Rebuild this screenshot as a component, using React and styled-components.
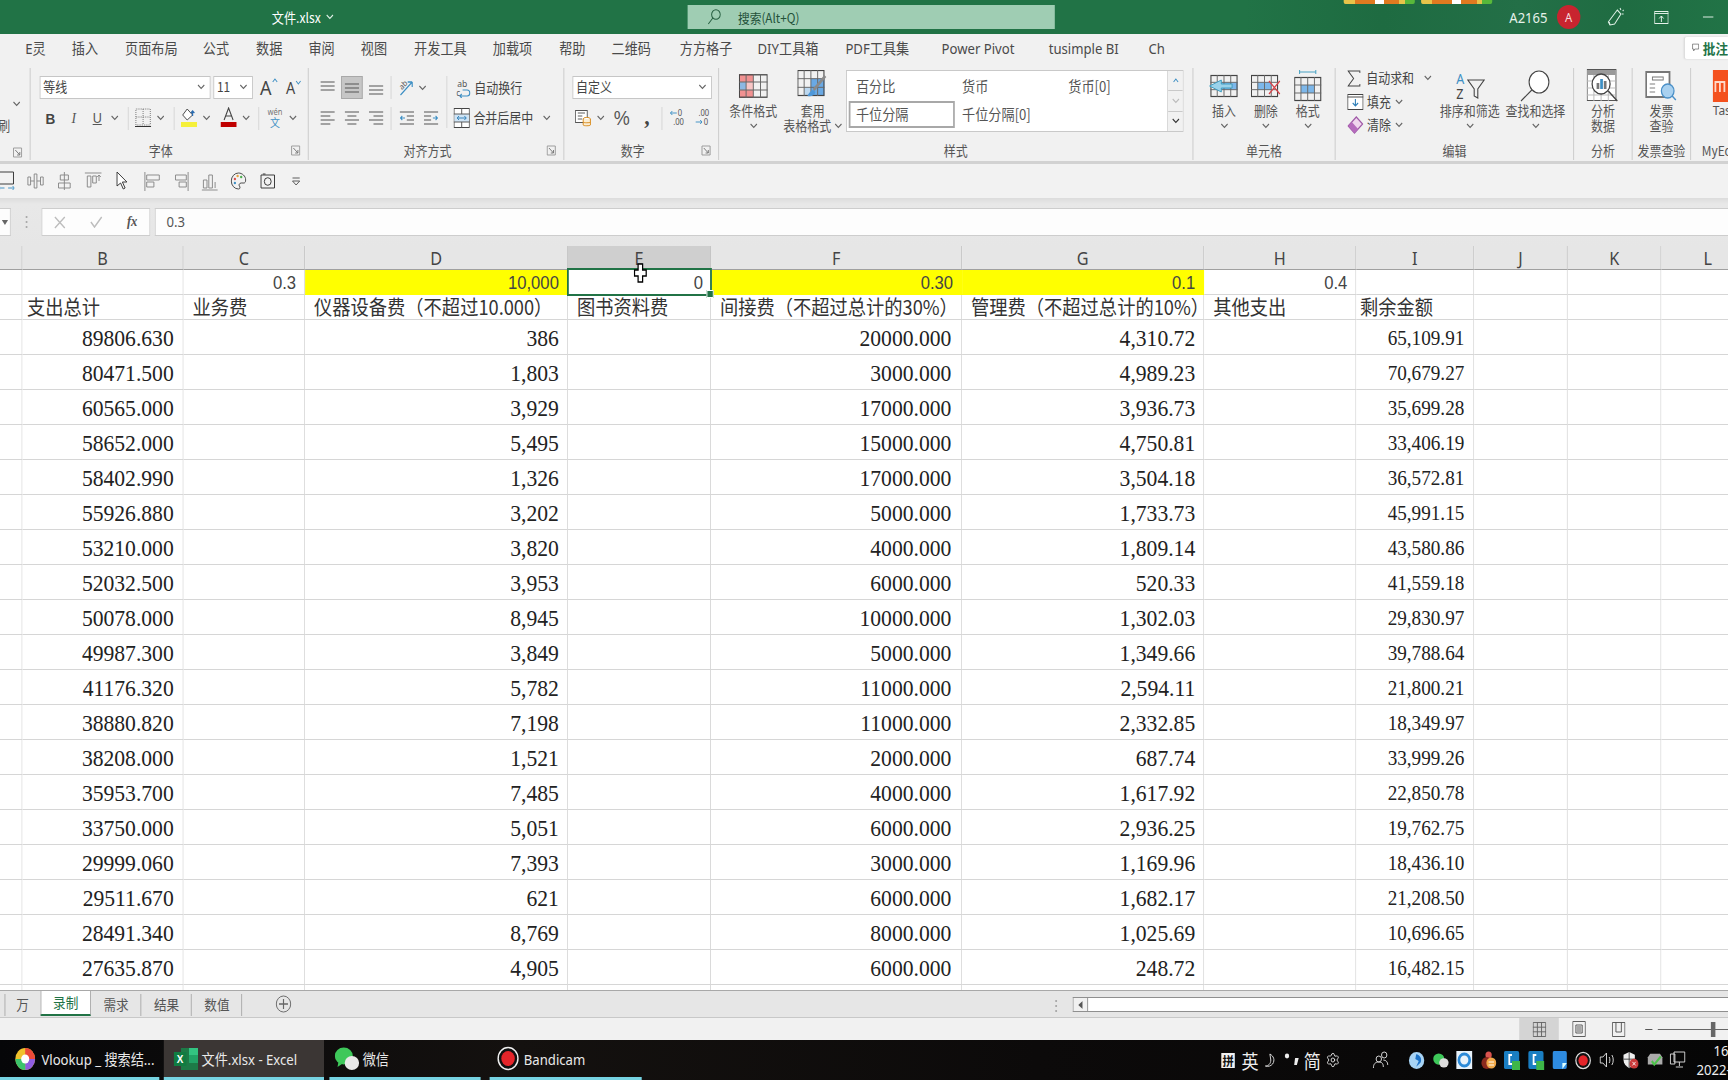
import React from 'react'
import styled, { createGlobalStyle } from 'styled-components'
import { Settings } from 'lucide-react'

const UI_FONT = `"Noto Sans", "Noto Sans CJK SC", sans-serif`
const CJK_FONT = `"Noto Sans CJK SC", "Noto Sans", sans-serif`

const GlobalStyle = createGlobalStyle`
  html, body {
    margin: 0;
    padding: 0;
    width: 1728px;
    height: 1080px;
    overflow: hidden;
    background: #000;
  }
  #root {
    width: 1728px;
    height: 1080px;
    overflow: hidden;
  }
`

// The capture is a 1920 wide desktop squeezed to 1728, so the page is laid out at 1920.
const Desktop = styled.div`
  width: 1920px;
  height: 1080px;
  display: flex;
  flex-direction: column;
  transform: scaleX(0.9);
  transform-origin: left top;
  font-family: ${UI_FONT};
  color: #444;
  background: #f1f1f1;
`

/* ---------- title bar ---------- */
const TitleBar = styled.div`
  flex: 0 0 34px;
  display: flex;
  align-items: center;
  background: linear-gradient(90deg, #217346 0 72%, #1e6b41 80%, #236f47 88%, #1f6c42 94%, #217346 100%);
  color: #fff;
  padding-left: 302px;
  overflow: hidden;
`
const FileName = styled.span`
  font-size: 13.5px;
  font-family: ${CJK_FONT};
  width: 53px;
  white-space: nowrap;
`
const SearchBox = styled.div`
  width: 408px;
  height: 24px;
  margin-left: 393px;
  background: #9fcdb3;
  display: flex;
  align-items: center;
  padding-left: 22px;
  box-sizing: border-box;
  color: #24523a;
  font-size: 13px;
  font-family: ${CJK_FONT};
`
const SearchText = styled.span`
  margin-left: 19px;
`
const Ornaments = styled.div`
  display: flex;
  gap: 7px;
  align-self: flex-start;
  margin-left: 321px;
`
const Ornament = styled.div`
  width: 79px;
  height: 4px;
  border-radius: 0 0 2px 2px;
  background: linear-gradient(90deg, #e8c44a 0 16%, #e07a20 16% 44%, #fff 44% 56%, #e07a20 56% 78%, #e8c44a 78% 86%, #58b83a 86%);
`
const UserName = styled.span`
  margin-left: 19px;
  font-size: 14.5px;
  color: #e6f2ea;
  width: 41px;
`
const Avatar = styled.span`
  margin-left: 12px;
  width: 26px;
  height: 24px;
  border-radius: 50%;
  background: #c8242f;
  color: #f6dcdc;
  font-size: 12.5px;
  display: flex;
  align-items: center;
  justify-content: center;
`
const TitleIcon = styled.span`
  display: inline-flex;
  margin-left: ${p => p.$ml}px;
`

/* ---------- ribbon tabs ---------- */
const TabRow = styled.div`
  flex: 0 0 34px;
  box-sizing: border-box;
  padding-bottom: 7px;
  display: flex;
  align-items: center;
  background: #f1f1f1;
  overflow: hidden;
`
const RibbonTab = styled.span`
  margin-left: ${p => p.$ml}px;
  font-size: 14.6px;
  font-family: ${UI_FONT};
  color: #4a4a4a;
  white-space: nowrap;
`
const CommentButton = styled.div`
  margin-left: auto;
  width: 48px;
  height: 22px;
  background: #fff;
  border-radius: 2px 0 0 2px;
  box-shadow: 0 0 2px #ccc;
  display: flex;
  align-items: center;
  padding-left: 8px;
  gap: 4px;
  box-sizing: border-box;
  overflow: hidden;
  color: #217346;
  font-size: 14px;
  font-weight: 700;
  font-family: ${CJK_FONT};
  white-space: nowrap;
`

/* ---------- ribbon ---------- */
const Ribbon = styled.div`
  flex: 0 0 96px;
  box-sizing: border-box;
  display: flex;
  background: #f1f1f1;
  border-bottom: 3px solid #d2d2d2;
  overflow: hidden;
`
const Group = styled.div`
  flex: 0 0 ${p => p.$w}px;
  box-sizing: border-box;
  height: 92px;
  display: flex;
  flex-direction: column;
  border-right: ${p => (p.$last ? 'none' : '1px solid #c8c8c8')};
`
const GroupBody = styled.div`
  flex: 1;
  min-height: 0;
  display: flex;
  padding-left: ${p => p.$pl || 0}px;
`
const StackBody = styled(GroupBody)`
  flex-direction: column;
`
const GroupFoot = styled.div`
  flex: 0 0 16px;
  display: flex;
  align-items: center;
  font-size: 13.3px;
  font-family: ${CJK_FONT};
  color: #555;
  white-space: nowrap;
`
const FootLabel = styled.span`
  flex: 1;
  text-align: center;
`
const Launcher = styled.span`
  flex: 0 0 19px;
  display: flex;
  justify-content: flex-start;
`
const ControlRow = styled.div`
  display: flex;
  align-items: center;
  height: ${p => p.$h || 23}px;
  margin-top: ${p => p.$mt || 0}px;
`
const Slot = styled.span`
  flex: 0 0 ${p => p.$w}px;
  margin-left: ${p => p.$ml || 0}px;
  display: inline-flex;
  align-items: center;
  justify-content: center;
  height: ${p => (p.$active ? '23px' : 'auto')};
  background: ${p => (p.$active ? '#c6c6c6' : 'transparent')};
  box-shadow: ${p => (p.$active ? 'inset 0 0 0 1px #a8a8a8' : 'none')};
`
const Sep = styled.span`
  flex: 0 0 1px;
  height: ${p => p.$h || 23}px;
  margin-left: ${p => p.$ml}px;
  background: #d4d4d4;
  align-self: ${p => (p.$tall ? 'flex-start' : 'auto')};
`
const Combo = styled.div`
  flex: 0 0 ${p => p.$w}px;
  margin-left: ${p => p.$ml || 0}px;
  box-sizing: border-box;
  height: 23px;
  background: #fff;
  border: 1px solid #c6c6c6;
  display: flex;
  align-items: center;
  justify-content: space-between;
  padding: 0 5px 2px 3px;
  font-size: 13.3px;
  font-family: ${CJK_FONT};
  color: #444;
`
const Bold = styled.span`
  font: 700 15px "Liberation Sans", sans-serif;
  color: #444;
`
const Italic = styled.span`
  font: italic 400 15px "Liberation Serif", serif;
  color: #555;
`
const Under = styled.span`
  font: 400 14px "Liberation Sans", sans-serif;
  color: #555;
  text-decoration: underline;
`
const GrowLetter = styled.span`
  margin-left: ${p => p.$ml}px;
  font: 400 ${p => p.$size}px "Noto Sans", sans-serif;
  color: #444;
  display: inline-flex;
  align-items: flex-start;
  line-height: 1;
`
const InlineLabel = styled.span`
  margin-left: ${p => p.$ml || 4}px;
  padding-bottom: 1px;
  font-size: 13.3px;
  font-family: ${CJK_FONT};
  color: #444;
  white-space: nowrap;
`
const Percent = styled.span`
  font: 400 20px "Liberation Sans", sans-serif;
  color: #555;
`
const Comma = styled.span`
  font: 700 24px/10px "Liberation Serif", serif;
  color: #444;
  height: 14px;
`
const BigButton = styled.div`
  flex: 0 0 ${p => p.$w}px;
  margin-left: ${p => p.$ml || 0}px;
  display: flex;
  flex-direction: column;
  align-items: center;
  font-size: 13.3px;
  line-height: 15px;
  font-family: ${CJK_FONT};
  color: #555;
  white-space: nowrap;
`
const BigIcon = styled.div`
  height: 35px;
  display: flex;
  align-items: center;
  justify-content: center;
`
const ButtonLine = styled.div`
  display: flex;
  align-items: center;
  justify-content: center;
  height: 15px;
  gap: 3px;
`
const Gallery = styled.div`
  flex: 0 0 372px;
  margin-left: 2px;
  margin-top: 2px;
  height: 62px;
  box-sizing: border-box;
  background: #fff;
  border: 1px solid #c9c9c9;
  display: flex;
`
const StyleGrid = styled.div`
  flex: 1;
  display: grid;
  grid-template-columns: 118px 118px 118px;
  grid-template-rows: 30px 27px;
  padding: 0 0 0 2px;
`
const StyleCell = styled.div`
  box-sizing: border-box;
  display: flex;
  align-items: center;
  padding: 0 0 2px 6px;
  font-size: 14.6px;
  font-family: ${CJK_FONT};
  color: #555;
  border: ${p => (p.$on ? '2px solid #a8a8a8' : '2px solid transparent')};
  background: #fff;
`
const GalleryArrows = styled.div`
  flex: 0 0 16px;
  display: flex;
  flex-direction: column;
  border-left: 1px solid #c9c9c9;
`
const GalleryArrow = styled.div`
  flex: 1;
  display: flex;
  align-items: center;
  justify-content: center;
  background: #f1f1f1;
  border-bottom: 1px solid #c9c9c9;
  &:last-child {
    border-bottom: none;
  }
`
const EditRows = styled.div`
  flex: 0 0 101px;
  display: flex;
  flex-direction: column;
  gap: 3.5px;
  padding-left: 13px;
`
const EditRow = styled.div`
  height: 20px;
  display: flex;
  align-items: center;
`
const ClippedBrush = styled.div`
  flex: 1;
  display: flex;
  flex-direction: column;
  align-items: flex-end;
  padding: 33px 10px 0 0;
  font-size: 14px;
  font-family: ${CJK_FONT};
  color: #555;
  gap: 9px;
`
const CutText = styled.span`
  align-self: flex-start;
  margin-left: -2px;
  font-size: 13.3px;
`
const MyEdButton = styled(BigButton)`
  align-items: flex-start;
  padding-left: 24px;
  font-family: ${UI_FONT};
`

/* ---------- quick access strip ---------- */
const QuickBar = styled.div`
  flex: 0 0 34px;
  display: flex;
  align-items: center;
  background: #f2f2f2;
`

/* ---------- formula bar ---------- */
const FormulaArea = styled.div`
  flex: 0 0 48px;
  box-sizing: border-box;
  padding-top: 10px;
  display: flex;
  align-items: flex-start;
  background: linear-gradient(#dcdcdc, #e8e8e8 6px, #e6e6e6);
`
const FormulaBox = styled.div`
  height: 28px;
  box-sizing: border-box;
  background: #fdfdfd;
  border: 1px solid #cdcdcd;
  display: flex;
  align-items: center;
`
const NameBox = styled(FormulaBox)`
  flex: 0 0 12px;
  justify-content: flex-end;
  border-left: none;
  padding-right: 2px;
`
const FormulaDots = styled.span`
  flex: 0 0 34px;
  height: 28px;
  display: flex;
  align-items: center;
  justify-content: center;
`
const ButtonsBox = styled(FormulaBox)`
  flex: 0 0 121px;
  gap: 27px;
  padding-left: 13px;
`
const FormulaInput = styled(FormulaBox)`
  flex: 1;
  margin-left: 5px;
  border-right: none;
  padding: 0 0 3px 12px;
  font: 400 14.6px "Noto Sans", sans-serif;
  color: #555;
`
const Fx = styled.span`
  font: italic 700 14px "Liberation Serif", serif;
  color: #555;
`

/* ---------- sheet ---------- */
const Sheet = styled.div`
  position: relative;
  flex: 1;
  min-height: 0;
  overflow: hidden;
  background: #fff;
`
const COLUMNS = '25px 179px 135px 292px 159px 279px 269px 169px 131px 104px 104px 104px'
const Row = styled.div`
  display: grid;
  grid-template-columns: ${COLUMNS};
  grid-template-rows: ${p => p.$h}px;
  height: ${p => p.$h}px;
`
const HeadCell = styled.div`
  box-sizing: border-box;
  display: flex;
  align-items: center;
  justify-content: center;
  background: ${p => (p.$on ? '#cfcfcf' : '#e6e6e6')};
  border-right: 1px solid #c4c4c4;
  border-bottom: 1px solid #a0a0a0;
  font: 400 18px "Noto Sans", sans-serif;
  line-height: 1;
  color: #444;
`
const Cell = styled.div`
  box-sizing: border-box;
  min-height: 0;
  display: flex;
  align-items: center;
  justify-content: ${p => (p.$text ? 'flex-start' : 'flex-end')};
  padding: ${p => (p.$text ? `0 0 0 ${p.$pl}px` : `0 ${p.$pr || 11}px 0 0`)};
  border-right: 1px solid ${p => (p.$fill ? p.$fill : '#d6d6d6')};
  border-bottom: 1px solid ${p => (p.$fill ? p.$fill : '#d6d6d6')};
  background: ${p => p.$fill || '#fff'};
  white-space: nowrap;
  line-height: 1;
`
const NumCell = styled(Cell)`
  font: 400 ${p => p.$size || 24}px/1 "Liberation Serif", serif;
  color: #222;
  padding-top: ${p => (p.$size ? 3 : 2)}px;
`
const ParamCell = styled(Cell)`
  font: 400 18.5px/1 "Liberation Sans", sans-serif;
  color: #444;
  padding-right: 9px;
  padding-top: 2px;
`
const TitleCell = styled(Cell)`
  font: 400 20.3px/1 ${CJK_FONT};
  color: #333;
  padding-bottom: 1px;
`
const SelectedCell = styled(ParamCell)`
  position: relative;
  margin: -2px 0 0 -1px;
  width: calc(100% + 2px);
  height: calc(100% + 3px);
  border: 2px solid #217346;
  padding-right: 8px;
  z-index: 1;
`
const FillHandle = styled.span`
  position: absolute;
  right: -4px;
  bottom: -4px;
  width: 6px;
  height: 6px;
  background: #217346;
  border: 1px solid #fff;
`
const CellCursor = styled.svg`
  position: absolute;
  left: 704px;
  top: 17px;
  z-index: 2;
`

/* ---------- sheet tabs ---------- */
const SheetBar = styled.div`
  flex: 0 0 28px;
  box-sizing: border-box;
  display: flex;
  background: #e6e6e6;
  border-top: 1px solid #a8a8a8;
  border-bottom: 1px solid #c8c8c8;
  padding-left: 5px;
  align-items: flex-start;
`
const SheetTab = styled.div`
  padding: 0 ${p => p.$px || 13}px 2px;
  height: ${p => (p.$on ? 25 : 22)}px;
  margin-top: ${p => (p.$on ? 0 : 3)}px;
  display: flex;
  align-items: center;
  font-size: 14px;
  font-family: ${CJK_FONT};
  color: ${p => (p.$on ? '#217346' : '#555')};
  background: ${p => (p.$on ? '#fff' : 'transparent')};
  border-left: 1px solid ${p => (p.$on ? '#a8a8a8' : 'transparent')};
  border-right: 1px solid ${p => (p.$line ? '#a8a8a8' : p.$on ? '#a8a8a8' : 'transparent')};
  border-bottom: ${p => (p.$on ? '2px solid #217346' : 'none')};
  box-sizing: border-box;
  &:first-child {
    border-left: 1px solid #a8a8a8;
  }
`
const AddSheet = styled.span`
  margin-left: 37px;
  margin-top: 4px;
  display: inline-flex;
`
const ScrollGrip = styled.span`
  margin-left: 848px;
  margin-top: 9px;
  display: inline-flex;
`
const ScrollTrack = styled.div`
  flex: 1;
  margin-left: 17px;
  margin-top: 6px;
  height: 15px;
  box-sizing: border-box;
  background: #fff;
  border: 1px solid #8f8f8f;
  border-right: none;
  display: flex;
`
const ScrollLeft = styled.span`
  flex: 0 0 15px;
  background: #f1f1f1;
  border-right: 1px solid #8f8f8f;
  display: flex;
  align-items: center;
  justify-content: center;
`

/* ---------- status bar ---------- */
const StatusBar = styled.div`
  flex: 0 0 22px;
  display: flex;
  align-items: center;
  background: #f1f1f1;
  padding-left: 1688px;
  overflow: hidden;
`
const ViewButton = styled.span`
  flex: 0 0 ${p => p.$w}px;
  height: 22px;
  display: flex;
  align-items: center;
  justify-content: center;
  background: ${p => (p.$on ? '#d4d4d4' : 'transparent')};
`
const ZoomMinus = styled.span`
  flex: 0 0 8px;
  height: 1px;
  background: #555;
  margin-left: 8px;
`
const ZoomTrack = styled.span`
  flex: 1;
  height: 1px;
  margin-left: 6px;
  background: #666;
  position: relative;
`
const ZoomThumb = styled.span`
  position: absolute;
  left: 59px;
  top: -7px;
  width: 5px;
  height: 15px;
  background: #666;
`

/* ---------- taskbar ---------- */
const TaskBar = styled.div`
  flex: 0 0 40px;
  display: flex;
  background: linear-gradient(90deg, #060608, #14110f 30%, #0c0a0a 60%, #060606);
  color: #e9e9e9;
  overflow: hidden;
`
const TaskItem = styled.div`
  flex: 0 0 ${p => p.$w}px;
  margin-left: ${p => p.$ml || 0}px;
  box-sizing: border-box;
  display: flex;
  align-items: center;
  gap: ${p => p.$gap || 5}px;
  padding-left: ${p => p.$pl}px;
  background: ${p => (p.$on ? '#3b3634' : 'transparent')};
  border-bottom: 3px solid #76d3e2;
  font-size: 14.6px;
  font-family: ${UI_FONT};
  white-space: nowrap;
  overflow: hidden;
`
const TrayCluster = styled.div`
  flex: 1;
  display: flex;
  align-items: center;
  padding-left: 644px;
`
const TrayGlyph = styled.span`
  margin-left: ${p => p.$ml || 0}px;
  display: inline-flex;
  align-items: center;
  justify-content: center;
  width: ${p => p.$w || 18}px;
  font-size: ${p => p.$size || 19}px;
  line-height: 1;
  font-family: ${CJK_FONT};
  color: #eee;
`
const PinyinBadge = styled.span`
  width: 15px;
  height: 15px;
  background: #f2f2f2;
  color: #111;
  font: 700 12.5px/15px ${CJK_FONT};
  text-align: center;
  overflow: hidden;
`
const Clock = styled.div`
  margin-left: 12px;
  width: 60px;
  display: flex;
  flex-direction: column;
  align-items: flex-start;
  font-size: 14.6px;
  line-height: 19px;
  color: #eee;
  white-space: nowrap;
`
const ClockTime = styled.span`
  margin-left: 19px;
`

/* ---------- icons ---------- */
const Chev = ({ c = '#666' }) => (
  <svg width="9" height="6" viewBox="0 0 9 6"><path d="M1 1l3.5 3.5L8 1" fill="none" stroke={c} strokeWidth="1.2" /></svg>
)
const Caret = ({ up }) => (
  <svg width="7" height="5" viewBox="0 0 7 5"><path d={up ? 'M1 4l2.5-3L6 4' : 'M1 1l2.5 3L6 1'} fill="none" stroke="#3d8fc4" strokeWidth="1.1" /></svg>
)
const Corner = () => (
  <svg width="11" height="11" viewBox="0 0 11 11" fill="none" stroke="#777"><path d="M1 1h9v9H1z" stroke="#999" /><path d="M3 3l5 5M8 5v3H5" /></svg>
)
const Lines = ({ rows }) => (
  <svg width="16" height="16" viewBox="0 0 16 16" stroke="#555" strokeWidth="1.1">
    {rows.map(([y, a, b]) => <line key={y} x1={a} x2={b} y1={y} y2={y} />)}
  </svg>
)
const Borders = () => (
  <svg width="18" height="20" viewBox="0 0 18 20" fill="none" stroke="#777" strokeDasharray="1 1">
    <path d="M1 1h16v16H1zM9 1v16M1 9h16" />
    <path d="M0 18.5h18" stroke="#333" strokeDasharray="none" strokeWidth="1.2" />
  </svg>
)
const FillColor = () => (
  <svg width="18" height="22" viewBox="0 0 18 22">
    <path d="M7 2l-5 6 5 5 6-5z" fill="#fff" stroke="#444" />
    <path d="M13 4v5M11 6l2-2 2 2" stroke="#2b6cb0" fill="none" strokeWidth="1.3" />
    <rect x="0" y="15" width="18" height="5" fill="#f5f03a" />
  </svg>
)
const FontColor = () => (
  <svg width="18" height="22" viewBox="0 0 18 22">
    <path d="M4 13L9 1l5 12M6 9h6" fill="none" stroke="#444" strokeWidth="1.2" />
    <rect x="0" y="15" width="18" height="5" fill="#c00000" />
  </svg>
)
const Pinyin = () => (
  <svg width="17" height="22" viewBox="0 0 17 22">
    <text x="8.5" y="8" textAnchor="middle" fontSize="8.5" fontFamily="Noto Sans, sans-serif" fill="#777">wén</text>
    <text x="8.5" y="20" textAnchor="middle" fontSize="11" fontFamily="Noto Sans CJK SC, sans-serif" fill="#3d8fc4">文</text>
  </svg>
)
const Orientation = () => (
  <svg width="18" height="18" viewBox="0 0 18 18" fill="none">
    <path d="M2 16L15 3M15 3h-5M15 3v5" stroke="#3d8fc4" strokeWidth="1.3" />
    <text x="1" y="9" fontSize="8" fontFamily="Noto Sans, sans-serif" fill="#555" transform="rotate(-45 5 7)">ab</text>
  </svg>
)
const Wrap = () => (
  <svg width="16" height="20" viewBox="0 0 16 20" fill="none">
    <text x="1" y="8.5" fontSize="9.5" fontFamily="Noto Sans, sans-serif" fill="#555">ab</text>
    <path d="M7 12h5a3 3 0 010 6H4M6 16l-2 2 2 2" stroke="#3d8fc4" strokeWidth="1.2" />
    <text x="0" y="18" fontSize="9" fontFamily="Noto Sans, sans-serif" fill="#555">c</text>
  </svg>
)
const Indent = ({ flip }) => (
  <svg width="16" height="16" viewBox="0 0 16 16" fill="none" stroke="#555" strokeWidth="1.1" transform={flip ? 'scale(-1 1)' : undefined}>
    <path d="M0 2h16M8 6h8M8 10h8M0 14h16" />
    <path d="M6 8H1M3 6L1 8l2 2" stroke="#3d8fc4" />
  </svg>
)
const Merge = () => (
  <svg width="18" height="20" viewBox="0 0 18 20" fill="none">
    <rect x=".5" y=".5" width="17" height="19" fill="#fff" stroke="#444" />
    <rect x="1" y="6" width="16" height="8" fill="#cfe4f5" />
    <path d="M0 6h18M0 14h18M9 0v6M9 14v6" stroke="#555" />
    <path d="M4 10h10M6 8l-2 2 2 2M12 8l2 2-2 2" stroke="#2f7fb8" />
  </svg>
)
const Accounting = () => (
  <svg width="18" height="18" viewBox="0 0 18 18" fill="none">
    <rect x=".5" y="1.5" width="13" height="12" stroke="#555" fill="#fff" />
    <path d="M3 4h8M3 7h5M3 10h5" stroke="#555" />
    <ellipse cx="13" cy="10" rx="4" ry="1.6" fill="#fff" stroke="#d88a1a" />
    <path d="M9 10v6c0 1 8 1 8 0v-6M9 13c0 1 8 1 8 0" stroke="#d88a1a" fill="#fbeed5" />
  </svg>
)
const Decimal = ({ more }) => (
  <svg width="18" height="18" viewBox="0 0 18 18" fill="none">
    <text x={more ? 4 : 9} y="7" fontSize="8.5" fontFamily="Noto Sans, sans-serif" fill="#555">{more ? '.00' : '0'}</text>
    <text x={more ? 10 : 4} y="16" fontSize="8.5" fontFamily="Noto Sans, sans-serif" fill="#555">{more ? '0' : '.00'}</text>
    {more
      ? <path d="M1 13h7M6 11l2 2-2 2" stroke="#3d8fc4" />
      : <path d="M8 4H1M3 2L1 4l2 2" stroke="#3d8fc4" />}
  </svg>
)
const TableGrid = ({ fills = [], w = 30, h = 22 }) => {
  const cw = w / 4
  const ch = h / 3
  return (
    <>
      {fills.map(([c, r, color, cs = 1, rs = 1]) => (
        <rect key={`${c}${r}`} x={c * cw} y={r * ch} width={cs * cw} height={rs * ch} fill={color} />
      ))}
      <rect x=".5" y=".5" width={w - 1} height={h - 1} fill="none" stroke="#444" strokeWidth="1.2" />
      {[1, 2, 3].map(i => <line key={`v${i}`} x1={i * cw} x2={i * cw} y1="0" y2={h} stroke="#666" />)}
      {[1, 2].map(i => <line key={`h${i}`} y1={i * ch} y2={i * ch} x1="0" x2={w} stroke="#666" />)}
    </>
  )
}
const CondFormat = () => (
  <svg width="32" height="24" viewBox="0 0 30 22">
    <TableGrid fills={[[0, 0, '#f19191', 2], [0, 1, '#8db8e3', 1], [0, 2, '#f19191', 2], [1, 1, '#f9c6c6', 1]]} />
  </svg>
)
const TableFormat = () => (
  <svg width="34" height="32" viewBox="0 0 34 32">
    <TableGrid fills={[[2, 1, '#6aa9e4', 2, 2], [1, 2, '#bcd8f0', 1]]} w={30} h={26} />
    <path d="M31 6L18 20" stroke="#8a8a8a" strokeWidth="3" />
    <path d="M18 20c-3 0-5 3-7 6 4 1 8 0 9-4z" fill="#4d97d8" />
  </svg>
)
const InsertCells = () => (
  <svg width="36" height="24" viewBox="0 0 36 24">
    <g transform="translate(3 1)">
      <TableGrid w={30} h={22} fills={[[1, 1, '#7db7ea', 3]]} />
    </g>
    <path d="M15 6L2 12l0 0 13 6v-4h12v-4H15z" fill="#9bd2ea" stroke="#3d9cc0" />
  </svg>
)
const DeleteCells = () => (
  <svg width="34" height="24" viewBox="0 0 34 24">
    <g transform="translate(0 1)">
      <TableGrid w={30} h={22} fills={[[1, 1, '#7db7ea', 2]]} />
    </g>
    <path d="M20 7l12 13M32 7L20 20" stroke="#d9444a" strokeWidth="1.4" />
  </svg>
)
const FormatCells = () => (
  <svg width="31" height="32" viewBox="0 0 31 32">
    <path d="M6 2h18M6 0v4M24 0v4" stroke="#3d9cc0" />
    <g transform="translate(0 7)">
      <TableGrid w={30} h={24} fills={[[1, 1, '#7db7ea', 2]]} />
    </g>
  </svg>
)
const Sigma = () => (
  <svg width="15" height="17" viewBox="0 0 15 17"><path d="M14 3V1H1l6 7.5L1 16h13v-2" fill="none" stroke="#444" strokeWidth="1.1" /></svg>
)
const FillDown = () => (
  <svg width="18" height="16" viewBox="0 0 18 16" fill="none">
    <rect x=".5" y=".5" width="17" height="15" fill="#fff" stroke="#444" />
    <path d="M0 3h18" stroke="#444" />
    <path d="M9 5v7M6 9l3 3 3-3" stroke="#2f7fb8" strokeWidth="1.2" />
  </svg>
)
const Eraser = () => (
  <svg width="18" height="18" viewBox="0 0 18 18">
    <path d="M1 10l9-9 7 7-9 9z" fill="#f0d5ee" stroke="#a05aa8" strokeWidth="1.3" />
    <path d="M1 10l4-4 7 7-4 4z" fill="#b66bbd" />
  </svg>
)
const SortFilter = () => (
  <svg width="33" height="30" viewBox="0 0 33 30" fill="none">
    <text x="1" y="13" fontSize="14" fontFamily="Noto Sans, sans-serif" fill="#3d8fc4">A</text>
    <text x="1" y="28" fontSize="14" fontFamily="Noto Sans, sans-serif" fill="#444">Z</text>
    <path d="M14 9h18l-7 9v9l-4-2v-7z" stroke="#444" strokeWidth="1.2" />
  </svg>
)
const Magnifier = () => (
  <svg width="34" height="32" viewBox="0 0 34 32" fill="none" stroke="#444" strokeWidth="1.2">
    <circle cx="21" cy="12" r="11" fill="#fff" />
    <path d="M13 20L1 31" />
  </svg>
)
const AnalyzeData = () => (
  <svg width="36" height="34" viewBox="0 0 36 34" fill="none">
    <rect x=".5" y=".5" width="32" height="31" fill="#fff" stroke="#555" />
    <rect x="1" y="1" width="31" height="5" fill="#9a9a9a" />
    <path d="M0 12h32M0 19h32M0 26h32M8 6v26M16 6v26M24 6v26" stroke="#bbb" />
    <circle cx="16" cy="15" r="10" fill="#fff" stroke="#444" strokeWidth="1.4" />
    <rect x="11" y="14" width="3" height="6" fill="#777" />
    <rect x="15" y="10" width="3" height="10" fill="#3d8fc4" />
    <rect x="19" y="12" width="3" height="8" fill="#777" />
    <path d="M24 22l10 10" stroke="#444" strokeWidth="1.6" />
  </svg>
)
const Invoice = () => (
  <svg width="36" height="30" viewBox="0 0 36 30" fill="none">
    <rect x="1" y="1" width="26" height="25" fill="#fff" stroke="#777" strokeWidth="2" />
    <rect x="8" y="6" width="12" height="3" stroke="#777" />
    <path d="M5 13h6M5 17h6M5 21h6" stroke="#777" />
    <circle cx="25" cy="20" r="7" fill="#a9d1f0" stroke="#4a90c8" strokeWidth="1.4" />
    <path d="M30 25l4 4" stroke="#4a90c8" strokeWidth="1.6" />
  </svg>
)
const MyEdLogo = () => (
  <svg width="20" height="32" viewBox="0 0 20 32">
    <rect width="20" height="32" fill="#f4511e" />
    <path d="M3 22V12h5v10M8 12h5v10" fill="none" stroke="#ffd8c8" strokeWidth="2" />
  </svg>
)
const SearchGlass = () => (
  <svg width="15" height="16" viewBox="0 0 15 16" fill="none" stroke="#245c3e" strokeWidth="1.1">
    <circle cx="9.5" cy="5.5" r="4.8" />
    <path d="M6 9l-5 6" />
  </svg>
)
const Pen = () => (
  <svg width="19" height="20" viewBox="0 0 19 20" fill="none" stroke="#dff0e6" strokeWidth="1.1">
    <path d="M11 3l4 4-7 10-5 1-2-3z" />
    <path d="M3 18l-1-3M14 1l1 2M17 4l1-1M16 7h2" />
  </svg>
)
const RibbonDisplay = () => (
  <svg width="16" height="14" viewBox="0 0 16 14" fill="none" stroke="#e6f2ea">
    <rect x=".5" y="1.5" width="15" height="12" />
    <path d="M0 3.5h16M8 12V6M5.5 8.5L8 6l2.5 2.5" />
  </svg>
)
const Minimize = () => (
  <svg width="12" height="2" viewBox="0 0 12 2"><path d="M0 1h12" stroke="#e6f2ea" /></svg>
)
const CommentIcon = () => (
  <svg width="13" height="13" viewBox="0 0 13 13" fill="none" stroke="#444"><path d="M1 1h11v8H5l-2 3V9H1z" /></svg>
)
const Dots = ({ c = '#aaa' }) => (
  <svg width="3" height="12" viewBox="0 0 3 12" fill={c}>
    <rect x=".5" y="0" width="2" height="2" />
    <rect x=".5" y="5" width="2" height="2" />
    <rect x=".5" y="10" width="2" height="2" />
  </svg>
)

/* quick access icons share one box and one line colour */
const QuickIcon = styled.svg`
  flex: 0 0 auto;
  margin-left: ${p => p.$ml}px;
  fill: none;
  stroke: ${p => p.$ink || '#888'};
`
const Palette = () => (
  <QuickIcon $ml={14} $ink="#444" width="18" height="20" viewBox="0 0 18 20">
    <path d="M9 2a8 8 0 100 16c2 0 2-2 1-3s0-3 2-3h3c1 0 2-1 2-3 0-4-4-7-8-7z" />
    <circle cx="5" cy="8" r="1.3" fill="#d9534f" stroke="none" />
    <circle cx="8" cy="5" r="1.3" fill="#e8a33d" stroke="none" />
    <circle cx="12" cy="6" r="1.3" fill="#4caf50" stroke="none" />
    <circle cx="5" cy="12" r="1.3" fill="#3d8fc4" stroke="none" />
  </QuickIcon>
)

/* sheet data */
const columnsHead = ['', 'B', 'C', 'D', 'E', 'F', 'G', 'H', 'I', 'J', 'K', 'L']
const rows = [
  ['89806.630', '386', '20000.000', '4,310.72', '65,109.91'],
  ['80471.500', '1,803', '3000.000', '4,989.23', '70,679.27'],
  ['60565.000', '3,929', '17000.000', '3,936.73', '35,699.28'],
  ['58652.000', '5,495', '15000.000', '4,750.81', '33,406.19'],
  ['58402.990', '1,326', '17000.000', '3,504.18', '36,572.81'],
  ['55926.880', '3,202', '5000.000', '1,733.73', '45,991.15'],
  ['53210.000', '3,820', '4000.000', '1,809.14', '43,580.86'],
  ['52032.500', '3,953', '6000.000', '520.33', '41,559.18'],
  ['50078.000', '8,945', '10000.000', '1,302.03', '29,830.97'],
  ['49987.300', '3,849', '5000.000', '1,349.66', '39,788.64'],
  ['41176.320', '5,782', '11000.000', '2,594.11', '21,800.21'],
  ['38880.820', '7,198', '11000.000', '2,332.85', '18,349.97'],
  ['38208.000', '1,521', '2000.000', '687.74', '33,999.26'],
  ['35953.700', '7,485', '4000.000', '1,617.92', '22,850.78'],
  ['33750.000', '5,051', '6000.000', '2,936.25', '19,762.75'],
  ['29999.060', '7,393', '3000.000', '1,169.96', '18,436.10'],
  ['29511.670', '621', '6000.000', '1,682.17', '21,208.50'],
  ['28491.340', '8,769', '8000.000', '1,025.69', '10,696.65'],
  ['27635.870', '4,905', '6000.000', '248.72', '16,482.15'],
  ['', '', '', '', ''],
]
const ribbonTabs = [
  ['E灵', 28], ['插入', 29], ['页面布局', 30], ['公式', 28], ['数据', 30], ['审阅', 29], ['视图', 29], ['开发工具', 30],
  ['加载项', 29], ['帮助', 30], ['二维码', 29], ['方方格子', 32], ['DIY工具箱', 28], ['PDF工具集', 30],
  ['Power Pivot', 36], ['tusimple BI', 38], ['Ch', 33],
]

const Numbers = () => (
  <Sheet>
    <Row $h={24}>
      {columnsHead.map((c, i) => <HeadCell key={i} $on={c === 'E'}>{c}</HeadCell>)}
    </Row>
    <Row $h={25}>
      <ParamCell />
      <ParamCell />
      <ParamCell>0.3</ParamCell>
      <ParamCell $fill="#ffff00">10,000</ParamCell>
      <SelectedCell>0<FillHandle /></SelectedCell>
      <ParamCell $fill="#ffff00">0.30</ParamCell>
      <ParamCell $fill="#ffff00">0.1</ParamCell>
      <ParamCell>0.4</ParamCell>
      <ParamCell /><ParamCell /><ParamCell /><ParamCell />
    </Row>
    <Row $h={25}>
      <TitleCell />
      <TitleCell $text $pl={5}>支出总计</TitleCell>
      <TitleCell $text $pl={10}>业务费</TitleCell>
      <TitleCell $text $pl={10}>仪器设备费（不超过10.000）</TitleCell>
      <TitleCell $text $pl={10}>图书资料费</TitleCell>
      <TitleCell $text $pl={10}>间接费（不超过总计的30%）</TitleCell>
      <TitleCell $text $pl={10}>管理费（不超过总计的10%）</TitleCell>
      <TitleCell $text $pl={10}>其他支出</TitleCell>
      <TitleCell $text $pl={4}>剩余金额</TitleCell>
      <TitleCell /><TitleCell /><TitleCell />
    </Row>
    {rows.map(r => (
      <Row $h={35} key={r[0] + r[1]}>
        <NumCell />
        <NumCell $pr={10}>{r[0]}</NumCell>
        <NumCell />
        <NumCell $pr={9}>{r[1]}</NumCell>
        <NumCell />
        <NumCell>{r[2]}</NumCell>
        <NumCell $pr={9}>{r[3]}</NumCell>
        <NumCell />
        <NumCell $size={21.3} $pr={10}>{r[4]}</NumCell>
        <NumCell /><NumCell /><NumCell />
      </Row>
    ))}
    <CellCursor width="15" height="20" viewBox="0 0 15 20">
      <path d="M5 1h5v6h4v6h-4v6H5v-6H1V7h4z" fill="#fff" stroke="#000" strokeWidth="1.4" />
    </CellCursor>
  </Sheet>
)

const App = () => (
  <Desktop>
    <GlobalStyle />
    <TitleBar>
      <FileName>文件.xlsx</FileName>
      <TitleIcon $ml={7}><Chev c="#dff0e6" /></TitleIcon>
      <SearchBox>
        <SearchGlass />
        <SearchText>搜索(Alt+Q)</SearchText>
      </SearchBox>
      <Ornaments><Ornament /><Ornament /></Ornaments>
      <UserName>A2165</UserName>
      <Avatar>A</Avatar>
      <TitleIcon $ml={30}><Pen /></TitleIcon>
      <TitleIcon $ml={33}><RibbonDisplay /></TitleIcon>
      <TitleIcon $ml={38}><Minimize /></TitleIcon>
    </TitleBar>

    <TabRow>
      {ribbonTabs.map(([label, ml]) => <RibbonTab key={label} $ml={ml}>{label}</RibbonTab>)}
      <CommentButton><CommentIcon />批注</CommentButton>
    </TabRow>

    <Ribbon>
      <Group $w={34}>
        <ClippedBrush>
          <Chev />
          <CutText>刷</CutText>
        </ClippedBrush>
        <GroupFoot><FootLabel /><Launcher><Corner /></Launcher></GroupFoot>
      </Group>

      <Group $w={309}>
        <StackBody $pl={10}>
          <ControlRow $mt={8}>
            <Combo $w={190}>等线<Chev /></Combo>
            <Combo $w={44} $ml={3}>11<Chev /></Combo>
            <GrowLetter $size={20} $ml={8}>A<Caret up /></GrowLetter>
            <GrowLetter $size={16} $ml={9}>A<Caret /></GrowLetter>
          </ControlRow>
          <ControlRow $h={24} $mt={7}>
            <Slot $w={16} $ml={4}><Bold>B</Bold></Slot>
            <Slot $w={16} $ml={10}><Italic>I</Italic></Slot>
            <Slot $w={16} $ml={10}><Under>U</Under></Slot>
            <Slot $w={10} $ml={6}><Chev /></Slot>
            <Sep $ml={10} />
            <Slot $w={18} $ml={7}><Borders /></Slot>
            <Slot $w={10} $ml={5}><Chev /></Slot>
            <Sep $ml={10} />
            <Slot $w={18} $ml={7}><FillColor /></Slot>
            <Slot $w={10} $ml={5}><Chev /></Slot>
            <Slot $w={18} $ml={11}><FontColor /></Slot>
            <Slot $w={10} $ml={5}><Chev /></Slot>
            <Sep $ml={9} />
            <Slot $w={16} $ml={9}><Pinyin /></Slot>
            <Slot $w={10} $ml={6}><Chev /></Slot>
          </ControlRow>
        </StackBody>
        <GroupFoot><FootLabel>字体</FootLabel><Launcher><Corner /></Launcher></GroupFoot>
      </Group>

      <Group $w={284}>
        <StackBody>
          <ControlRow $mt={8}>
            <Slot $w={16} $ml={13}><Lines rows={[[2, 0, 16], [6, 0, 16], [10, 0, 16]]} /></Slot>
            <Slot $w={24} $ml={7} $active><Lines rows={[[4, 0, 16], [8, 0, 16], [12, 0, 16]]} /></Slot>
            <Slot $w={16} $ml={7}><Lines rows={[[6, 0, 16], [10, 0, 16], [14, 0, 16]]} /></Slot>
            <Sep $ml={8} />
            <Slot $w={18} $ml={8}><Orientation /></Slot>
            <Slot $w={10} $ml={3}><Chev /></Slot>
            <Sep $ml={22} $h={52} $tall />
            <Slot $w={16} $ml={10}><Wrap /></Slot>
            <InlineLabel>自动换行</InlineLabel>
          </ControlRow>
          <ControlRow $h={24} $mt={7}>
            <Slot $w={16} $ml={13}><Lines rows={[[2, 0, 16], [6, 0, 11], [10, 0, 16], [14, 0, 11]]} /></Slot>
            <Slot $w={16} $ml={11}><Lines rows={[[2, 0, 16], [6, 3, 13], [10, 0, 16], [14, 3, 13]]} /></Slot>
            <Slot $w={16} $ml={11}><Lines rows={[[2, 0, 16], [6, 5, 16], [10, 0, 16], [14, 5, 16]]} /></Slot>
            <Sep $ml={8} />
            <Slot $w={16} $ml={9}><Indent /></Slot>
            <Slot $w={16} $ml={11}><Indent flip /></Slot>
            <Slot $w={18} $ml={17}><Merge /></Slot>
            <InlineLabel>合并后居中</InlineLabel>
            <Slot $w={10} $ml={10}><Chev /></Slot>
          </ControlRow>
        </StackBody>
        <GroupFoot><FootLabel>对齐方式</FootLabel><Launcher><Corner /></Launcher></GroupFoot>
      </Group>

      <Group $w={172}>
        <StackBody $pl={9}>
          <ControlRow $mt={8}>
            <Combo $w={155}>自定义<Chev /></Combo>
          </ControlRow>
          <ControlRow $h={24} $mt={7}>
            <Slot $w={18} $ml={3}><Accounting /></Slot>
            <Slot $w={10} $ml={5}><Chev /></Slot>
            <Slot $w={17} $ml={10}><Percent>%</Percent></Slot>
            <Slot $w={10} $ml={14}><Comma>,</Comma></Slot>
            <Sep $ml={11} />
            <Slot $w={17} $ml={8}><Decimal /></Slot>
            <Slot $w={17} $ml={10}><Decimal more /></Slot>
          </ControlRow>
        </StackBody>
        <GroupFoot><FootLabel>数字</FootLabel><Launcher><Corner /></Launcher></GroupFoot>
      </Group>

      <Group $w={527}>
        <GroupBody $pl={8}>
          <BigButton $w={60}>
            <BigIcon><CondFormat /></BigIcon>
            <ButtonLine>条件格式</ButtonLine>
            <ButtonLine><Chev /></ButtonLine>
          </BigButton>
          <BigButton $w={70} $ml={1}>
            <BigIcon><TableFormat /></BigIcon>
            <ButtonLine>套用</ButtonLine>
            <ButtonLine>表格格式<Chev /></ButtonLine>
          </BigButton>
          <Gallery>
            <StyleGrid>
              <StyleCell>百分比</StyleCell>
              <StyleCell>货币</StyleCell>
              <StyleCell>货币[0]</StyleCell>
              <StyleCell $on>千位分隔</StyleCell>
              <StyleCell>千位分隔[0]</StyleCell>
              <StyleCell />
            </StyleGrid>
            <GalleryArrows>
              <GalleryArrow><Caret up /></GalleryArrow>
              <GalleryArrow><Chev c="#bbb" /></GalleryArrow>
              <GalleryArrow><Chev c="#333" /></GalleryArrow>
            </GalleryArrows>
          </Gallery>
        </GroupBody>
        <GroupFoot><FootLabel>样式</FootLabel></GroupFoot>
      </Group>

      <Group $w={158}>
        <GroupBody $pl={11}>
          <BigButton $w={46}>
            <BigIcon><InsertCells /></BigIcon>
            <ButtonLine>插入</ButtonLine>
            <ButtonLine><Chev /></ButtonLine>
          </BigButton>
          <BigButton $w={47}>
            <BigIcon><DeleteCells /></BigIcon>
            <ButtonLine>删除</ButtonLine>
            <ButtonLine><Chev /></ButtonLine>
          </BigButton>
          <BigButton $w={46}>
            <BigIcon><FormatCells /></BigIcon>
            <ButtonLine>格式</ButtonLine>
            <ButtonLine><Chev /></ButtonLine>
          </BigButton>
        </GroupBody>
        <GroupFoot><FootLabel>单元格</FootLabel></GroupFoot>
      </Group>

      <Group $w={265}>
        <GroupBody>
          <EditRows>
            <EditRow><Sigma /><InlineLabel $ml={6}>自动求和</InlineLabel><Slot $w={10} $ml={10}><Chev /></Slot></EditRow>
            <EditRow><FillDown /><InlineLabel $ml={4}>填充</InlineLabel><Slot $w={10} $ml={4}><Chev /></Slot></EditRow>
            <EditRow><Eraser /><InlineLabel $ml={4}>清除</InlineLabel><Slot $w={10} $ml={4}><Chev /></Slot></EditRow>
          </EditRows>
          <BigButton $w={70}>
            <BigIcon><SortFilter /></BigIcon>
            <ButtonLine>排序和筛选</ButtonLine>
            <ButtonLine><Chev /></ButtonLine>
          </BigButton>
          <BigButton $w={70} $ml={3}>
            <BigIcon><Magnifier /></BigIcon>
            <ButtonLine>查找和选择</ButtonLine>
            <ButtonLine><Chev /></ButtonLine>
          </BigButton>
        </GroupBody>
        <GroupFoot><FootLabel>编辑</FootLabel></GroupFoot>
      </Group>

      <Group $w={65}>
        <GroupBody>
          <BigButton $w={64}>
            <BigIcon><AnalyzeData /></BigIcon>
            <ButtonLine>分析</ButtonLine>
            <ButtonLine>数据</ButtonLine>
          </BigButton>
        </GroupBody>
        <GroupFoot><FootLabel>分析</FootLabel></GroupFoot>
      </Group>

      <Group $w={64}>
        <GroupBody>
          <BigButton $w={64}>
            <BigIcon><Invoice /></BigIcon>
            <ButtonLine>发票</ButtonLine>
            <ButtonLine>查验</ButtonLine>
          </BigButton>
        </GroupBody>
        <GroupFoot><FootLabel>发票查验</FootLabel></GroupFoot>
      </Group>

      <Group $w={42} $last>
        <GroupBody>
          <MyEdButton $w={42}>
            <BigIcon><MyEdLogo /></BigIcon>
            <ButtonLine>Task</ButtonLine>
          </MyEdButton>
        </GroupBody>
        <GroupFoot><FootLabel>MyEdit</FootLabel></GroupFoot>
      </Group>
    </Ribbon>

    <QuickBar>
      <QuickIcon $ml={-2} $ink="#333" width="18" height="20" viewBox="0 0 18 20"><path d="M1 1h16v12H1z" /><path d="M0 17h7M11 17h7M2 15l-2 2 2 2M16 15l2 2-2 2" stroke="#3d8fc4" /></QuickIcon>
      <QuickIcon $ml={14} width="19" height="16" viewBox="0 0 19 16"><path d="M1 4h3v8H1zM8 1h3v14H8zM15 4h3v8h-3zM4 8h4M11 8h4" /></QuickIcon>
      <QuickIcon $ml={15} width="15" height="18" viewBox="0 0 15 18"><path d="M7.5 0v18M3 3h9v5H3zM1 11h13v5H1z" /></QuickIcon>
      <QuickIcon $ml={15} width="19" height="18" viewBox="0 0 19 18"><path d="M0 1h19M3 4h4v11H3zM9 4h4v7H9zM16 9V3M14 5l2-2 2 2" /></QuickIcon>
      <QuickIcon $ml={16} $ink="#333" width="13" height="20" viewBox="0 0 13 20"><path d="M1 1v14l4-3 3 6 2-1-3-6h5z" fill="#fff" /></QuickIcon>
      <QuickIcon $ml={18} width="18" height="19" viewBox="0 0 18 19"><path d="M1 0v19M3 3h14v5H3zM3 10h8v5H3z" /></QuickIcon>
      <QuickIcon $ml={14} width="18" height="19" viewBox="0 0 18 19"><path d="M17 0v19M3 3h12v5H3zM7 10h8v5H7z" /></QuickIcon>
      <QuickIcon $ml={14} width="18" height="19" viewBox="0 0 18 19"><path d="M0 18h18M2 8h4v8H2zM8 3h4v13H8zM15 10v6" /></QuickIcon>
      <Palette />
      <QuickIcon $ml={15} $ink="#333" width="17" height="16" viewBox="0 0 17 16"><path d="M1 2h15v13H1z" /><circle cx="8.5" cy="8.5" r="3.8" /><path d="M3 1h3" /></QuickIcon>
      <QuickIcon $ml={18} $ink="#555" width="10" height="10" viewBox="0 0 10 10"><path d="M1 2h8M1 5h8L5 9z" /></QuickIcon>
    </QuickBar>

    <FormulaArea>
      <NameBox><svg width="7" height="5" viewBox="0 0 7 5"><path d="M0 0h7L3.5 5z" fill="#666" /></svg></NameBox>
      <FormulaDots><Dots /></FormulaDots>
      <ButtonsBox>
        <svg width="13" height="13" viewBox="0 0 13 13"><path d="M1 1l11 11M12 1L1 12" stroke="#bdbdbd" strokeWidth="1.6" /></svg>
        <svg width="14" height="12" viewBox="0 0 14 12"><path d="M1 6l4 5 8-10" stroke="#bdbdbd" strokeWidth="1.6" fill="none" /></svg>
        <Fx>fx</Fx>
      </ButtonsBox>
      <FormulaInput>0.3</FormulaInput>
    </FormulaArea>

    <Numbers />

    <SheetBar>
      <SheetTab $px={12}>万</SheetTab>
      <SheetTab $on>录制</SheetTab>
      <SheetTab $line>需求</SheetTab>
      <SheetTab $line>结果</SheetTab>
      <SheetTab $line>数值</SheetTab>
      <AddSheet>
        <svg width="18" height="18" viewBox="0 0 18 18" fill="none" stroke="#666"><circle cx="9" cy="9" r="8" /><path d="M9 4v10M4 9h10" strokeWidth="1.3" /></svg>
      </AddSheet>
      <ScrollGrip><Dots /></ScrollGrip>
      <ScrollTrack>
        <ScrollLeft><svg width="5" height="8" viewBox="0 0 5 8"><path d="M5 0v8L0 4z" fill="#555" /></svg></ScrollLeft>
      </ScrollTrack>
    </SheetBar>

    <StatusBar>
      <ViewButton $w={44} $on>
        <svg width="15" height="15" viewBox="0 0 15 15" fill="none" stroke="#666"><path d="M.5.5h14v14H.5zM5.2 0v15M9.8 0v15M0 5.2h15M0 9.8h15" /></svg>
      </ViewButton>
      <ViewButton $w={44}>
        <svg width="15" height="16" viewBox="0 0 15 16" fill="none" stroke="#555"><path d="M.5.5h14v15H.5zM4 4h7v8H4zM5 6h5M5 8h5M5 10h5" /></svg>
      </ViewButton>
      <ViewButton $w={44}>
        <svg width="15" height="15" viewBox="0 0 15 15" fill="none" stroke="#555"><path d="M.5.5h14v14H.5zM4.5 0v10h6V0" /></svg>
      </ViewButton>
      <ZoomMinus />
      <ZoomTrack><ZoomThumb /></ZoomTrack>
    </StatusBar>

    <TaskBar>
      <TaskItem $w={177} $pl={16} $gap={6}>
        <svg width="24" height="24" viewBox="0 0 24 24">
          <circle cx="12" cy="12" r="11" fill="#f0c22c" />
          <path d="M12 1a11 11 0 0111 11H12z" fill="#ed4a39" />
          <path d="M23 12a11 11 0 01-11 11V12z" fill="#8e5ce0" />
          <path d="M12 23A11 11 0 011 12h11z" fill="#3cc46c" />
          <circle cx="12" cy="12" r="4.5" fill="#fff" />
        </svg>
        Vlookup _ 搜索结...
      </TaskItem>
      <TaskItem $w={178} $ml={5} $pl={11} $on $gap={4}>
        <svg width="27" height="24" viewBox="0 0 27 24">
          <rect x="8" y="1" width="19" height="22" fill="#1d7a47" />
          <rect x="17" y="1" width="10" height="7" fill="#33c481" />
          <rect x="17" y="8" width="10" height="8" fill="#21a366" />
          <rect x="0" y="5" width="14" height="14" fill="#107c41" />
          <text x="7" y="16" textAnchor="middle" fontSize="11" fontWeight="700" fontFamily="Liberation Sans, sans-serif" fill="#fff">X</text>
        </svg>
        文件.xlsx - Excel
      </TaskItem>
      <TaskItem $w={168} $ml={6} $pl={6} $gap={4}>
        <svg width="27" height="24" viewBox="0 0 27 24">
          <ellipse cx="10" cy="9" rx="10" ry="8.5" fill="#3ec85a" />
          <path d="M4 15l-1 5 5-3z" fill="#3ec85a" />
          <ellipse cx="19" cy="16" rx="8" ry="7" fill="#e8e8e8" />
        </svg>
        微信
      </TaskItem>
      <TaskItem $w={169} $ml={10} $pl={8} $gap={5}>
        <svg width="25" height="25" viewBox="0 0 25 25">
          <circle cx="12.5" cy="12.5" r="11" fill="#111" stroke="#eee" strokeWidth="1.6" />
          <circle cx="12.5" cy="12.5" r="7.5" fill="#e5252a" />
        </svg>
        Bandicam
      </TaskItem>
      <TrayCluster>
        <PinyinBadge>拼</PinyinBadge>
        <TrayGlyph $ml={8}>英</TrayGlyph>
        <TrayGlyph $ml={7} $w={14}>
          <svg width="14" height="15" viewBox="0 0 14 15" fill="none" stroke="#ddd"><path d="M6 1c4 2 6 6 3 10-2 2-5 3-8 2 3 0 6-2 6-6 0-2-1-4-1-6z" /></svg>
        </TrayGlyph>
        <TrayGlyph $ml={7} $w={18}>
          <svg width="18" height="16" viewBox="0 0 18 16" fill="#eee"><circle cx="4" cy="4" r="2.4" /><path d="M13 6h4l-2 7h-3z" /></svg>
        </TrayGlyph>
        <TrayGlyph $ml={5}>简</TrayGlyph>
        <TrayGlyph $ml={6} $w={16}><Settings size={16} strokeWidth={1.4} /></TrayGlyph>
        <TrayGlyph $ml={36}>
          <svg width="18" height="18" viewBox="0 0 18 18" fill="none" stroke="#ddd"><circle cx="7" cy="8" r="3" /><circle cx="13" cy="4" r="3" /><path d="M1 17c0-4 2-6 6-6s5 2 5 5M12 9c3 0 5 2 5 5" /></svg>
        </TrayGlyph>
        <TrayGlyph $ml={22}>
          <svg width="19" height="19" viewBox="0 0 19 19"><circle cx="9.5" cy="9.5" r="9" fill="#a8d4f5" /><path d="M9 3a6 6 0 015 9l-5 4 3-6-4-2z" fill="#1e73c8" /></svg>
        </TrayGlyph>
        <TrayGlyph $ml={9}>
          <svg width="19" height="17" viewBox="0 0 19 17"><ellipse cx="7" cy="7" rx="6.5" ry="6" fill="#3ec85a" /><ellipse cx="13" cy="11" rx="5.5" ry="5" fill="#ddd" /></svg>
        </TrayGlyph>
        <TrayGlyph $ml={8}>
          <svg width="18" height="18" viewBox="0 0 18 18"><rect width="18" height="18" fill="#e8f2fa" /><circle cx="9" cy="9" r="6" fill="none" stroke="#2b8ad8" strokeWidth="3" /></svg>
        </TrayGlyph>
        <TrayGlyph $ml={9}>
          <svg width="18" height="20" viewBox="0 0 18 20"><circle cx="9" cy="5" r="3.5" fill="#d9534f" /><ellipse cx="7" cy="13" rx="6" ry="6" fill="#8a2a1e" /><circle cx="12" cy="13" r="5.5" fill="#f0a848" /><path d="M9 12h6M9 15h6" stroke="#fff" /></svg>
        </TrayGlyph>
        <TrayGlyph $ml={8}>
          <svg width="18" height="19" viewBox="0 0 18 19"><rect width="17" height="18" rx="2" fill="#1a7ec2" /><path d="M9 4H6v9h3" stroke="#fff" strokeWidth="2" fill="none" /><rect x="9" y="10" width="9" height="9" fill="#3eb648" /></svg>
        </TrayGlyph>
        <TrayGlyph $ml={9}>
          <svg width="18" height="19" viewBox="0 0 18 19"><rect width="17" height="18" rx="2" fill="#1a7ec2" /><path d="M9 4H6v9h3" stroke="#fff" strokeWidth="2" fill="none" /><rect x="9" y="10" width="9" height="9" fill="#3eb648" /></svg>
        </TrayGlyph>
        <TrayGlyph $ml={9} $w={16}>
          <svg width="16" height="18" viewBox="0 0 16 18"><rect width="16" height="18" rx="2" fill="#2e8be0" /><path d="M11 18V12h5" fill="#dff" /></svg>
        </TrayGlyph>
        <TrayGlyph $ml={9}>
          <svg width="19" height="19" viewBox="0 0 19 19"><circle cx="9.5" cy="9.5" r="8.5" fill="#111" stroke="#ddd" strokeWidth="1.4" /><circle cx="9.5" cy="9.5" r="5.5" fill="#e5252a" /></svg>
        </TrayGlyph>
        <TrayGlyph $ml={9}>
          <svg width="18" height="16" viewBox="0 0 18 16" fill="none" stroke="#ddd"><path d="M1 5h3l4-4v14l-4-4H1zM11 5c1 2 1 4 0 6M14 3c2 3 2 7 0 10" /></svg>
        </TrayGlyph>
        <TrayGlyph $ml={8}>
          <svg width="20" height="19" viewBox="0 0 20 19"><path d="M8 0l7 3v6c0 4-3 7-7 9-4-2-7-5-7-9V3z" fill="#eee" /><path d="M8 0v18M1 8h14" stroke="#333" /><circle cx="14" cy="13" r="5.5" fill="#c93a3a" /><path d="M12 11l4 4M16 11l-4 4" stroke="#fff" /></svg>
        </TrayGlyph>
        <TrayGlyph $ml={9}>
          <svg width="20" height="17" viewBox="0 0 20 17"><path d="M1 5l3-4h12l3 4v8H1z" fill="#aaa" /><path d="M6 9l3 4 8-9" stroke="#4dc24a" strokeWidth="2.5" fill="none" /></svg>
        </TrayGlyph>
        <TrayGlyph $ml={7}>
          <svg width="18" height="18" viewBox="0 0 18 18" fill="none" stroke="#ddd"><path d="M5 1h12v10H5zM1 3h5v10H1zM11 11v4M7 16h8" /></svg>
        </TrayGlyph>
        <Clock>
          <ClockTime>16:</ClockTime>
          <span>2022-</span>
        </Clock>
      </TrayCluster>
    </TaskBar>
  </Desktop>
)

export default App
